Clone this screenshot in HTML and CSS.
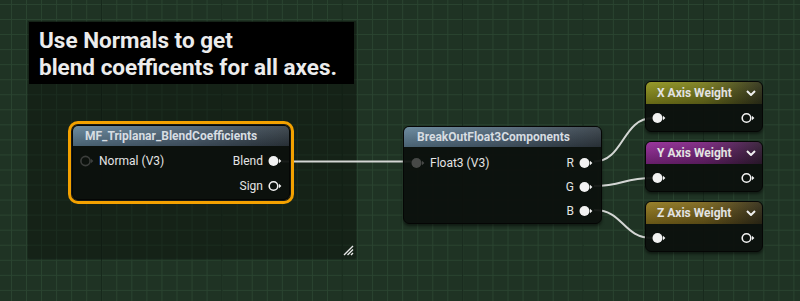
FILE: index.html
```html
<!DOCTYPE html>
<html lang="en">
<head>
    <meta charset="UTF-8">
    <title>Material Graph</title>
    <link rel="stylesheet" href="styles.css">
</head>
<body>
    <div class="graph">
        <!-- comment box -->
        <div class="comment">
            <div class="comment-title">Use Normals to get<br>blend coefficents for all axes.</div>
            <svg class="grip" viewBox="0 0 12 12">
                <path d="M11 2 L2 11 M11 5.5 L5.5 11 M11 9 L9 11"/>
            </svg>
        </div>

        <!-- wires -->
        <svg class="wires" width="800" height="301">
            <path d="M282 161.5 L412 161.5"/>
            <path d="M594 161.5 C624 161.5 622 118 653 118"/>
            <path d="M594 186 C624 186 622 178 653 178"/>
            <path d="M594 210 C624 210 622 238 653 238"/>
        </svg>

        <div class="node node-mf selected">
            <div class="node-header header-blue">MF_Triplanar_BlendCoefficients</div>
            <div class="node-body">
                <div class="row">
                    <div class="pin-in">
                        <svg class="pin pin-dark" viewBox="0 0 14 12"><circle cx="5.5" cy="6" r="4.6"/><path d="M11 3.8 L13.4 6 L11 8.2Z"/></svg>
                        <span>Normal (V3)</span>
                    </div>
                    <div class="pin-out">
                        <span>Blend</span>
                        <svg class="pin pin-filled" viewBox="0 0 14 12"><circle cx="5.5" cy="6" r="5"/><path d="M11 3.8 L13.4 6 L11 8.2Z"/></svg>
                    </div>
                </div>
                <div class="row">
                    <div class="pin-out">
                        <span>Sign</span>
                        <svg class="pin pin-hollow" viewBox="0 0 14 12"><circle cx="5.5" cy="6" r="4.3"/><path d="M11 3.8 L13.4 6 L11 8.2Z"/></svg>
                    </div>
                </div>
            </div>
        </div>

        <div class="node node-break">
            <div class="node-header header-blue">BreakOutFloat3Components</div>
            <div class="node-body">
                <div class="row">
                    <div class="pin-in">
                        <svg class="pin pin-grey" viewBox="0 0 14 12"><circle cx="5.5" cy="6" r="5"/><path d="M11 3.8 L13.4 6 L11 8.2Z"/></svg>
                        <span>Float3 (V3)</span>
                    </div>
                    <div class="pin-out">
                        <span>R</span>
                        <svg class="pin pin-filled" viewBox="0 0 14 12"><circle cx="5.5" cy="6" r="5"/><path d="M11 3.8 L13.4 6 L11 8.2Z"/></svg>
                    </div>
                </div>
                <div class="row">
                    <div class="pin-out">
                        <span>G</span>
                        <svg class="pin pin-filled" viewBox="0 0 14 12"><circle cx="5.5" cy="6" r="5"/><path d="M11 3.8 L13.4 6 L11 8.2Z"/></svg>
                    </div>
                </div>
                <div class="row">
                    <div class="pin-out">
                        <span>B</span>
                        <svg class="pin pin-filled" viewBox="0 0 14 12"><circle cx="5.5" cy="6" r="5"/><path d="M11 3.8 L13.4 6 L11 8.2Z"/></svg>
                    </div>
                </div>
            </div>
        </div>

        <div class="node node-param node-x">
            <div class="node-header header-x">
                <span>X Axis Weight</span>
                <svg class="chevron" viewBox="0 0 10 6"><path d="M1 1 L5 5 L9 1"/></svg>
            </div>
            <div class="param-body">
                <svg class="pin pin-filled" viewBox="0 0 14 12"><circle cx="5.5" cy="6" r="5"/><path d="M11 3.8 L13.4 6 L11 8.2Z"/></svg>
                <svg class="pin pin-hollow" viewBox="0 0 14 12"><circle cx="5.5" cy="6" r="4.3"/><path d="M11 3.8 L13.4 6 L11 8.2Z"/></svg>
            </div>
        </div>

        <div class="node node-param node-y">
            <div class="node-header header-y">
                <span>Y Axis Weight</span>
                <svg class="chevron" viewBox="0 0 10 6"><path d="M1 1 L5 5 L9 1"/></svg>
            </div>
            <div class="param-body">
                <svg class="pin pin-filled" viewBox="0 0 14 12"><circle cx="5.5" cy="6" r="5"/><path d="M11 3.8 L13.4 6 L11 8.2Z"/></svg>
                <svg class="pin pin-hollow" viewBox="0 0 14 12"><circle cx="5.5" cy="6" r="4.3"/><path d="M11 3.8 L13.4 6 L11 8.2Z"/></svg>
            </div>
        </div>

        <div class="node node-param node-z">
            <div class="node-header header-z">
                <span>Z Axis Weight</span>
                <svg class="chevron" viewBox="0 0 10 6"><path d="M1 1 L5 5 L9 1"/></svg>
            </div>
            <div class="param-body">
                <svg class="pin pin-filled" viewBox="0 0 14 12"><circle cx="5.5" cy="6" r="5"/><path d="M11 3.8 L13.4 6 L11 8.2Z"/></svg>
                <svg class="pin pin-hollow" viewBox="0 0 14 12"><circle cx="5.5" cy="6" r="4.3"/><path d="M11 3.8 L13.4 6 L11 8.2Z"/></svg>
            </div>
        </div>
    </div>
</body>
</html>
```

FILE: styles.css
```css
body {
    margin: 0;
    padding: 0;
    font-family: Roboto, "Liberation Sans", sans-serif;
    background-color: #1f3324;
}

.graph {
    position: relative;
    width: 800px;
    height: 301px;
    overflow: hidden;
    background-color: #1f3324;
    background-image:
        linear-gradient(to right, #17291c 1px, transparent 1px),
        linear-gradient(to right, #2a4430 1px, transparent 1px),
        linear-gradient(to bottom, #2a4430 1px, transparent 1px);
    background-size: 120.4px 100%, 15.05px 15.05px, 15.05px 15.05px;
    background-position: 101px 0, 11px 0, 0 4px;
}

/* comment */
.comment {
    position: absolute;
    left: 28px;
    top: 21px;
    width: 328px;
    height: 237px;
    background-color: rgba(8, 12, 8, 0.42);
    box-shadow: 0 1px 2px rgba(0, 0, 0, 0.45);
}

.comment-title {
    margin: 1px 2px 0 1px;
    height: 62px;
    box-sizing: border-box;
    padding: 5px 10px 0;
    background-color: #000;
    color: #ececec;
    font-size: 22.5px;
    font-weight: bold;
    line-height: 27px;
}

.grip {
    position: absolute;
    right: 2px;
    bottom: 2px;
    width: 12px;
    height: 12px;
}

.grip path {
    stroke: #e8e8e8;
    stroke-width: 1.4;
    fill: none;
}

/* wires */
.wires {
    position: absolute;
    left: 0;
    top: 0;
}

.wires path {
    fill: none;
    stroke: #d4d6d4;
    stroke-width: 2;
}

/* nodes */
.node {
    position: absolute;
    box-sizing: border-box;
    background-color: rgba(12, 16, 13, 0.94);
    border: 1px solid #050605;
    border-radius: 6px;
    box-shadow: 0 2px 3px rgba(0, 0, 0, 0.5);
    color: #e4e4e4;
    font-size: 12px;
}

.node.selected {
    box-shadow: 0 0 0 1px #171a16, 0 0 0 4px #f3a100;
}

.node-header {
    display: flex;
    align-items: center;
    justify-content: space-between;
    box-sizing: border-box;
    border-radius: 5px 5px 0 0;
    font-weight: bold;
    font-size: 12px;
    color: #d7dde2;
}

.header-blue {
    height: 20px;
    padding-left: 12px;
    background:
        linear-gradient(to bottom, rgba(255, 255, 255, 0.08), rgba(0, 0, 0, 0.25)),
        linear-gradient(to right, #628399, #4e6274 55%, #343e46);
}

.header-x {
    background:
        linear-gradient(to bottom, rgba(255, 255, 255, 0.05), rgba(0, 0, 0, 0.3)),
        linear-gradient(to right, #93961f, #7a7d1f 50%, #34361d);
}

.header-y {
    background:
        linear-gradient(to bottom, rgba(255, 255, 255, 0.05), rgba(0, 0, 0, 0.3)),
        linear-gradient(to right, #952c99, #7b2680 50%, #361f38);
}

.header-z {
    background:
        linear-gradient(to bottom, rgba(255, 255, 255, 0.05), rgba(0, 0, 0, 0.3)),
        linear-gradient(to right, #957b20, #7c671e 50%, #36301b);
}

.node-body {
    padding: 2px 7px 0 7px;
}

.row {
    display: flex;
    justify-content: space-between;
    align-items: center;
    height: 25px;
}

.row .pin-out:only-child {
    margin-left: auto;
}

.pin-in,
.pin-out {
    display: flex;
    align-items: center;
}

.pin-in span {
    margin-left: 5px;
}

.pin-out span {
    margin-right: 5px;
}

.pin {
    width: 14px;
    height: 12px;
    display: block;
}

.pin-filled circle {
    fill: #f2f2f2;
}

.pin-filled path,
.pin-hollow path {
    fill: #f2f2f2;
}

.pin-hollow circle {
    fill: none;
    stroke: #f2f2f2;
    stroke-width: 1.6;
}

.pin-dark circle {
    fill: none;
    stroke: #3c3e3c;
    stroke-width: 1.6;
}

.pin-dark path {
    fill: #3c3e3c;
}

.pin-grey circle,
.pin-grey path {
    fill: #474947;
}

.node-mf {
    left: 72px;
    top: 125px;
    width: 218px;
    height: 75px;
}

.node-break {
    left: 403px;
    top: 126px;
    width: 199px;
    height: 98px;
}

.node-break .header-blue {
    height: 20px;
    padding-left: 13px;
}

.node-break .node-body {
    padding: 4px 8px 0 7px;
}

.node-break .row {
    height: 24px;
}

/* parameter nodes */
.node-param {
    left: 645px;
    width: 118px;
    height: 51px;
}

.node-x {
    top: 81px;
}

.node-y {
    top: 141px;
}

.node-z {
    top: 201px;
}

.node-param .node-header {
    height: 22px;
    padding: 0 6px 0 11px;
    color: #e2e2e2;
}

.chevron {
    width: 10px;
    height: 6px;
}

.chevron path {
    fill: none;
    stroke: #f0f0f0;
    stroke-width: 2;
}

.param-body {
    display: flex;
    justify-content: space-between;
    align-items: center;
    height: 27px;
    padding: 0 7px 0 6px;
}
```
